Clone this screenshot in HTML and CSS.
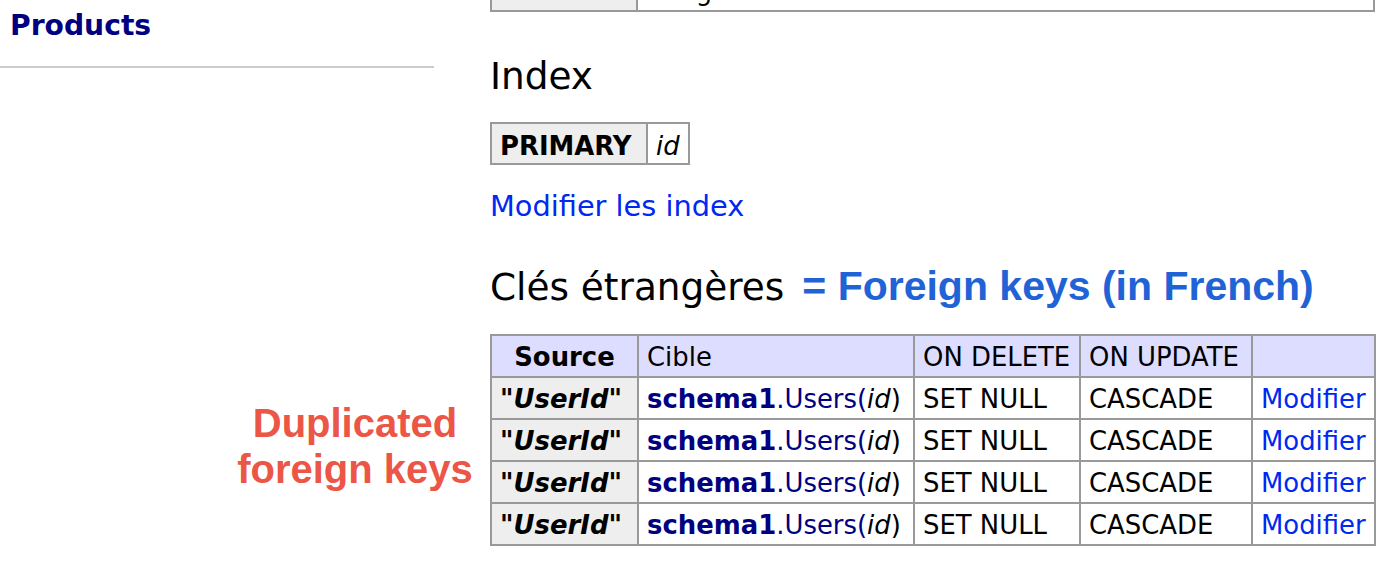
FILE: index.html
```html
<!DOCTYPE html>
<html lang="fr">
<head>
<meta charset="utf-8">
<title>Table: Products</title>
<link rel="stylesheet" href="styles.css">
</head>
<body>
<div class="page">
  <aside class="menu">
    <div class="menu-item"><a class="menu-link" href="#">Products</a></div>
  </aside>
  <main class="content">
    <table class="grid fields">
      <tbody>
        <tr><th class="f-name">Content</th><td class="f-type">integer</td></tr>
      </tbody>
    </table>

    <h3 class="section">Index</h3>
    <table class="grid indexes">
      <tbody>
        <tr><th class="i-kind">PRIMARY</th><td class="i-col"><i>id</i></td></tr>
      </tbody>
    </table>
    <p class="links"><a class="link" href="#">Modifier les index</a></p>

    <h3 class="section">Clés étrangères<span class="note note-blue">= Foreign keys (in French)</span></h3>
    <div class="fk-wrap">
      <div class="note note-red">Duplicated<br>foreign keys</div>
      <table class="grid fks">
        <thead>
          <tr>
            <th class="c-source">Source</th>
            <td class="c-target">Cible</td>
            <td class="c-del">ON DELETE</td>
            <td class="c-upd">ON UPDATE</td>
            <td class="c-act"></td>
          </tr>
        </thead>
        <tbody>
          <tr>
            <th class="src"><i>"UserId"</i></th>
            <td><a class="target" href="#"><b>schema1</b>.Users(</a><i>id</i>)</td>
            <td>SET NULL</td>
            <td>CASCADE</td>
            <td><a class="link" href="#">Modifier</a></td>
          </tr>
          <tr>
            <th class="src"><i>"UserId"</i></th>
            <td><a class="target" href="#"><b>schema1</b>.Users(</a><i>id</i>)</td>
            <td>SET NULL</td>
            <td>CASCADE</td>
            <td><a class="link" href="#">Modifier</a></td>
          </tr>
          <tr>
            <th class="src"><i>"UserId"</i></th>
            <td><a class="target" href="#"><b>schema1</b>.Users(</a><i>id</i>)</td>
            <td>SET NULL</td>
            <td>CASCADE</td>
            <td><a class="link" href="#">Modifier</a></td>
          </tr>
          <tr>
            <th class="src"><i>"UserId"</i></th>
            <td><a class="target" href="#"><b>schema1</b>.Users(</a><i>id</i>)</td>
            <td>SET NULL</td>
            <td>CASCADE</td>
            <td><a class="link" href="#">Modifier</a></td>
          </tr>
        </tbody>
      </table>
    </div>
  </main>
</div>
</body>
</html>
```
FILE: styles.css
```css
html, body {
  margin: 0;
  padding: 0;
  background: #fff;
}

body {
  font-family: "DejaVu Sans", Verdana, sans-serif;
  font-size: 28.8px;
  line-height: 36px;
  color: #000;
  overflow: hidden;
}

a {
  text-decoration: none;
}

.page {
  display: flex;
  align-items: flex-start;
  gap: 56px;
}

/* ---------- left menu ---------- */
.menu {
  flex: none;
  width: 434px;
}

.menu-item {
  padding: 8px 0 22px 10px;
  border-bottom: 2px solid #ccc;
  font-size: 28.2px;
  line-height: 36px;
  font-weight: bold;
}

.menu-link {
  color: #000080;
}

/* ---------- content ---------- */
.content {
  flex: 1;
  min-width: 0;
}

.section {
  margin: 42px 0 0;
  font-size: 37.4px;
  line-height: 44px;
  font-weight: normal;
  white-space: nowrap;
}

.section + .fk-wrap {
  margin-top: 25px;
}

.links {
  margin: 23px 0 0;
  line-height: 36px;
}

.links + .section {
  margin-top: 41px;
}

.link {
  color: #0028f0;
}

/* ---------- grid tables ---------- */
.grid {
  border-spacing: 0;
  border-top: 2px solid #999;
  border-left: 2px solid #999;
  font-size: 25.9px;
  line-height: 32px;
}

.grid th,
.grid td {
  box-sizing: border-box;
  border-right: 2px solid #999;
  border-bottom: 2px solid #999;
  padding: 5px 8px 3px;
  text-align: left;
  vertical-align: top;
  white-space: nowrap;
  font-weight: normal;
}

.grid th {
  background: #eee;
  font-weight: bold;
}

.grid thead th,
.grid thead td {
  background: #ddf;
}

.grid thead th {
  text-align: center;
}

/* fields table, scrolled mostly out of view */
.fields {
  margin-top: -32px;
}

.f-name { width: 146px; }
.f-type { width: 737px; }

/* index table */
.indexes {
  margin-top: 24px;
  line-height: 31px;
}

.indexes th,
.indexes td {
  padding-top: 7px;
  padding-bottom: 1px;
}

.i-kind { width: 156px; padding-left: 10px; }
.i-col { width: 40px; }

/* foreign keys */
.fk-wrap {
  position: relative;
}

.c-source { width: 147px; }
.c-target { width: 276px; }
.c-del { width: 166px; }
.c-upd { width: 172px; }
.c-act { width: 122px; }

.src {
  padding-left: 9px;
}

.target {
  color: #000080;
}

/* annotations */
.note {
  font-family: "Liberation Sans", Arial, Helvetica, sans-serif;
  font-weight: bold;
  font-size: 40px;
}

.note-blue {
  margin-left: 18px;
  font-size: 41px;
  line-height: 40px;
  color: #1f63d6;
}

.note-red {
  position: absolute;
  left: -270px;
  top: 66px;
  width: 270px;
  text-align: center;
  line-height: 46px;
  color: #ec5646;
}
```
